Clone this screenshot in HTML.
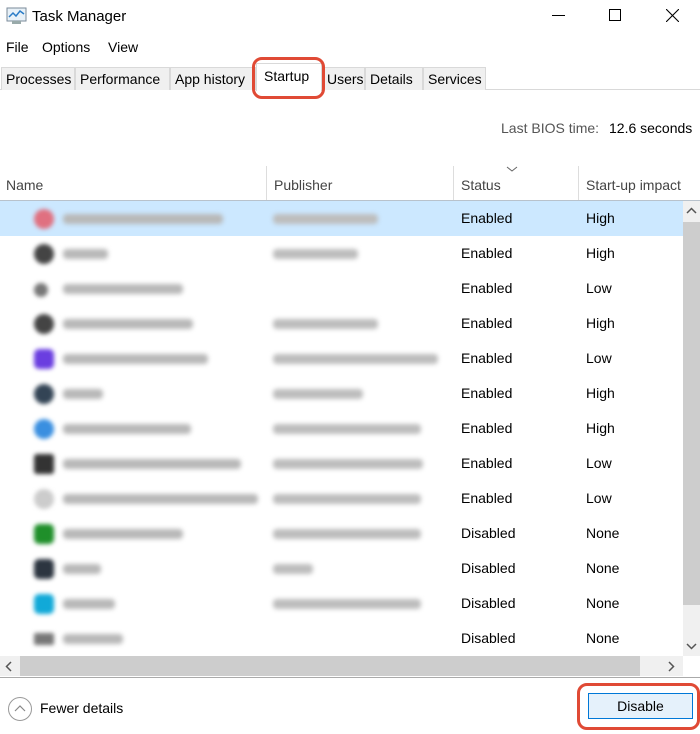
<!DOCTYPE html>
<html><head><meta charset="utf-8"><style>
*{margin:0;padding:0;box-sizing:border-box}
body{width:700px;height:734px;background:#fff;font-family:"Liberation Sans","DejaVu Sans",sans-serif;font-size:14px;color:#000;position:relative;overflow:hidden}
.a{position:absolute;white-space:nowrap}
.tab{position:absolute;top:67px;height:23px;background:#f0f0f0;border:1px solid #d9d9d9;border-bottom:none;font-size:14px;line-height:22px;padding-left:4px;color:#000}
.hd{position:absolute;top:177px;color:#444;font-size:14px}
.row{position:absolute;left:0;width:683px;height:35px}
.ic{position:absolute;left:34px;top:8px;width:20px;height:20px;border-radius:50%;filter:blur(2px)}
.nm{position:absolute;left:63px;top:13px;height:10px;background:#b8b8b8;filter:blur(2.5px);border-radius:4px}
.pb{position:absolute;left:273px;top:13px;height:10px;background:#bdbdbd;filter:blur(2.5px);border-radius:4px}
.st{position:absolute;left:461px;top:9px}
.im{position:absolute;left:586px;top:9px}
</style></head><body>
<svg class="a" style="left:6px;top:6px" width="22" height="20" viewBox="0 0 22 20"><rect x="1" y="2" width="19" height="13" fill="#e8f1f8" stroke="#7a8a99"/><polyline points="3,11 7,7 10,10 14,5 18,8" fill="none" stroke="#2a7cc7" stroke-width="1.5"/><rect x="6" y="15" width="9" height="3" fill="#9aa"/></svg>
<div class="a" style="left:32px;top:8px;font-size:15px">Task Manager</div>
<div class="a" style="left:552px;top:15px;width:13px;height:1px;background:#000"></div>
<div class="a" style="left:609px;top:9px;width:12px;height:12px;border:1px solid #000"></div>
<svg class="a" style="left:666px;top:9px" width="13" height="13"><path d="M0 0L13 13M13 0L0 13" stroke="#000" stroke-width="1.1"/></svg>
<div class="a" style="left:6px;top:39px">File</div>
<div class="a" style="left:42px;top:39px">Options</div>
<div class="a" style="left:108px;top:39px">View</div>
<div class="a" style="left:0;top:89px;width:700px;height:1px;background:#d9d9d9"></div>
<div class="tab" style="left:1px;width:74px">Processes</div>
<div class="tab" style="left:75px;width:95px">Performance</div>
<div class="tab" style="left:170px;width:86px">App history</div>
<div class="a" style="left:256px;top:63px;width:66px;height:28px;background:#fff;border:1px solid #d9d9d9;border-bottom:none;padding:4px 0 0 7px">Startup</div>
<div class="tab" style="left:322px;width:43px">Users</div>
<div class="tab" style="left:365px;width:58px">Details</div>
<div class="tab" style="left:423px;width:63px">Services</div>
<div class="a" style="left:252px;top:57px;width:73px;height:42px;border:3px solid #e04a35;border-radius:10px"></div>
<div class="a" style="left:501px;top:120px;color:#555">Last BIOS time:</div>
<div class="a" style="left:609px;top:120px">12.6 seconds</div>
<div class="a" style="left:266px;top:166px;width:1px;height:34px;background:#ddd"></div>
<div class="a" style="left:453px;top:166px;width:1px;height:34px;background:#ddd"></div>
<div class="a" style="left:578px;top:166px;width:1px;height:34px;background:#ddd"></div>
<svg class="a" style="left:506px;top:166px" width="12" height="7"><path d="M1 1L6 5L11 1" fill="none" stroke="#666"/></svg>
<div class="hd" style="left:6px">Name</div>
<div class="hd" style="left:274px">Publisher</div>
<div class="hd" style="left:461px">Status</div>
<div class="hd" style="left:586px">Start-up impact</div>
<div class="a" style="left:0;top:200px;width:700px;height:1px;background:#b8c2cc"></div>

<div class="row" style="top:201px;background:#cce8ff"><div class="ic" style="background:#e07080"></div><div class="nm" style="width:160px"></div><div class="pb" style="width:105px"></div><span class="st">Enabled</span><span class="im">High</span></div>
<div class="row" style="top:236px"><div class="ic" style="background:#444"></div><div class="nm" style="width:45px"></div><div class="pb" style="width:85px"></div><span class="st">Enabled</span><span class="im">High</span></div>
<div class="row" style="top:271px"><div class="ic" style="background:#777;width:14px;height:14px;top:12px"></div><div class="nm" style="width:120px"></div><span class="st">Enabled</span><span class="im">Low</span></div>
<div class="row" style="top:306px"><div class="ic" style="background:#444"></div><div class="nm" style="width:130px"></div><div class="pb" style="width:105px"></div><span class="st">Enabled</span><span class="im">High</span></div>
<div class="row" style="top:341px"><div class="ic" style="background:#6a3ee0;border-radius:5px"></div><div class="nm" style="width:145px"></div><div class="pb" style="width:165px"></div><span class="st">Enabled</span><span class="im">Low</span></div>
<div class="row" style="top:376px"><div class="ic" style="background:#345"></div><div class="nm" style="width:40px"></div><div class="pb" style="width:90px"></div><span class="st">Enabled</span><span class="im">High</span></div>
<div class="row" style="top:411px"><div class="ic" style="background:#3a8fe0"></div><div class="nm" style="width:128px"></div><div class="pb" style="width:148px"></div><span class="st">Enabled</span><span class="im">High</span></div>
<div class="row" style="top:446px"><div class="ic" style="background:#333;border-radius:3px"></div><div class="nm" style="width:178px"></div><div class="pb" style="width:150px"></div><span class="st">Enabled</span><span class="im">Low</span></div>
<div class="row" style="top:481px"><div class="ic" style="background:#ccc"></div><div class="nm" style="width:195px"></div><div class="pb" style="width:148px"></div><span class="st">Enabled</span><span class="im">Low</span></div>
<div class="row" style="top:516px"><div class="ic" style="background:#1f8f2a;border-radius:5px"></div><div class="nm" style="width:120px"></div><div class="pb" style="width:148px"></div><span class="st">Disabled</span><span class="im">None</span></div>
<div class="row" style="top:551px"><div class="ic" style="background:#2c3540;border-radius:5px"></div><div class="nm" style="width:38px"></div><div class="pb" style="width:40px"></div><span class="st">Disabled</span><span class="im">None</span></div>
<div class="row" style="top:586px"><div class="ic" style="background:#11a9d8;border-radius:5px"></div><div class="nm" style="width:52px"></div><div class="pb" style="width:148px"></div><span class="st">Disabled</span><span class="im">None</span></div>
<div class="row" style="top:621px"><div class="ic" style="background:#777;height:12px;top:12px;border-radius:2px"></div><div class="nm" style="width:60px"></div><span class="st">Disabled</span><span class="im">None</span></div>

<div class="a" style="left:683px;top:201px;width:17px;height:455px;background:#f0f0f0"></div>
<div class="a" style="left:683px;top:222px;width:17px;height:383px;background:#cdcdcd"></div>
<svg class="a" style="left:686px;top:207px" width="11" height="7"><path d="M1 6L5.5 1.5L10 6" fill="none" stroke="#555" stroke-width="1.5"/></svg>
<svg class="a" style="left:686px;top:643px" width="11" height="7"><path d="M1 1L5.5 5.5L10 1" fill="none" stroke="#555" stroke-width="1.5"/></svg>
<div class="a" style="left:0;top:656px;width:683px;height:20px;background:#f0f0f0"></div>
<div class="a" style="left:20px;top:656px;width:620px;height:20px;background:#cdcdcd"></div>
<svg class="a" style="left:5px;top:661px" width="7" height="11"><path d="M6 1L1.5 5.5L6 10" fill="none" stroke="#555" stroke-width="1.5"/></svg>
<svg class="a" style="left:668px;top:661px" width="7" height="11"><path d="M1 1L5.5 5.5L1 10" fill="none" stroke="#555" stroke-width="1.5"/></svg>
<div class="a" style="left:0;top:677px;width:700px;height:1px;background:#aaa"></div>

<div class="a" style="left:8px;top:697px;width:24px;height:24px;border:1px solid #999;border-radius:50%"></div>
<svg class="a" style="left:14px;top:704px" width="12" height="8"><path d="M1 7L6 2L11 7" fill="none" stroke="#888" stroke-width="1.2"/></svg>
<div class="a" style="left:40px;top:700px">Fewer details</div>
<div class="a" style="left:588px;top:693px;width:105px;height:26px;background:#e5f1fb;border:1px solid #0078d7;text-align:center;line-height:24px">Disable</div>
<div class="a" style="left:577px;top:683px;width:123px;height:47px;border:3px solid #e04a35;border-radius:10px"></div>
</body></html>
